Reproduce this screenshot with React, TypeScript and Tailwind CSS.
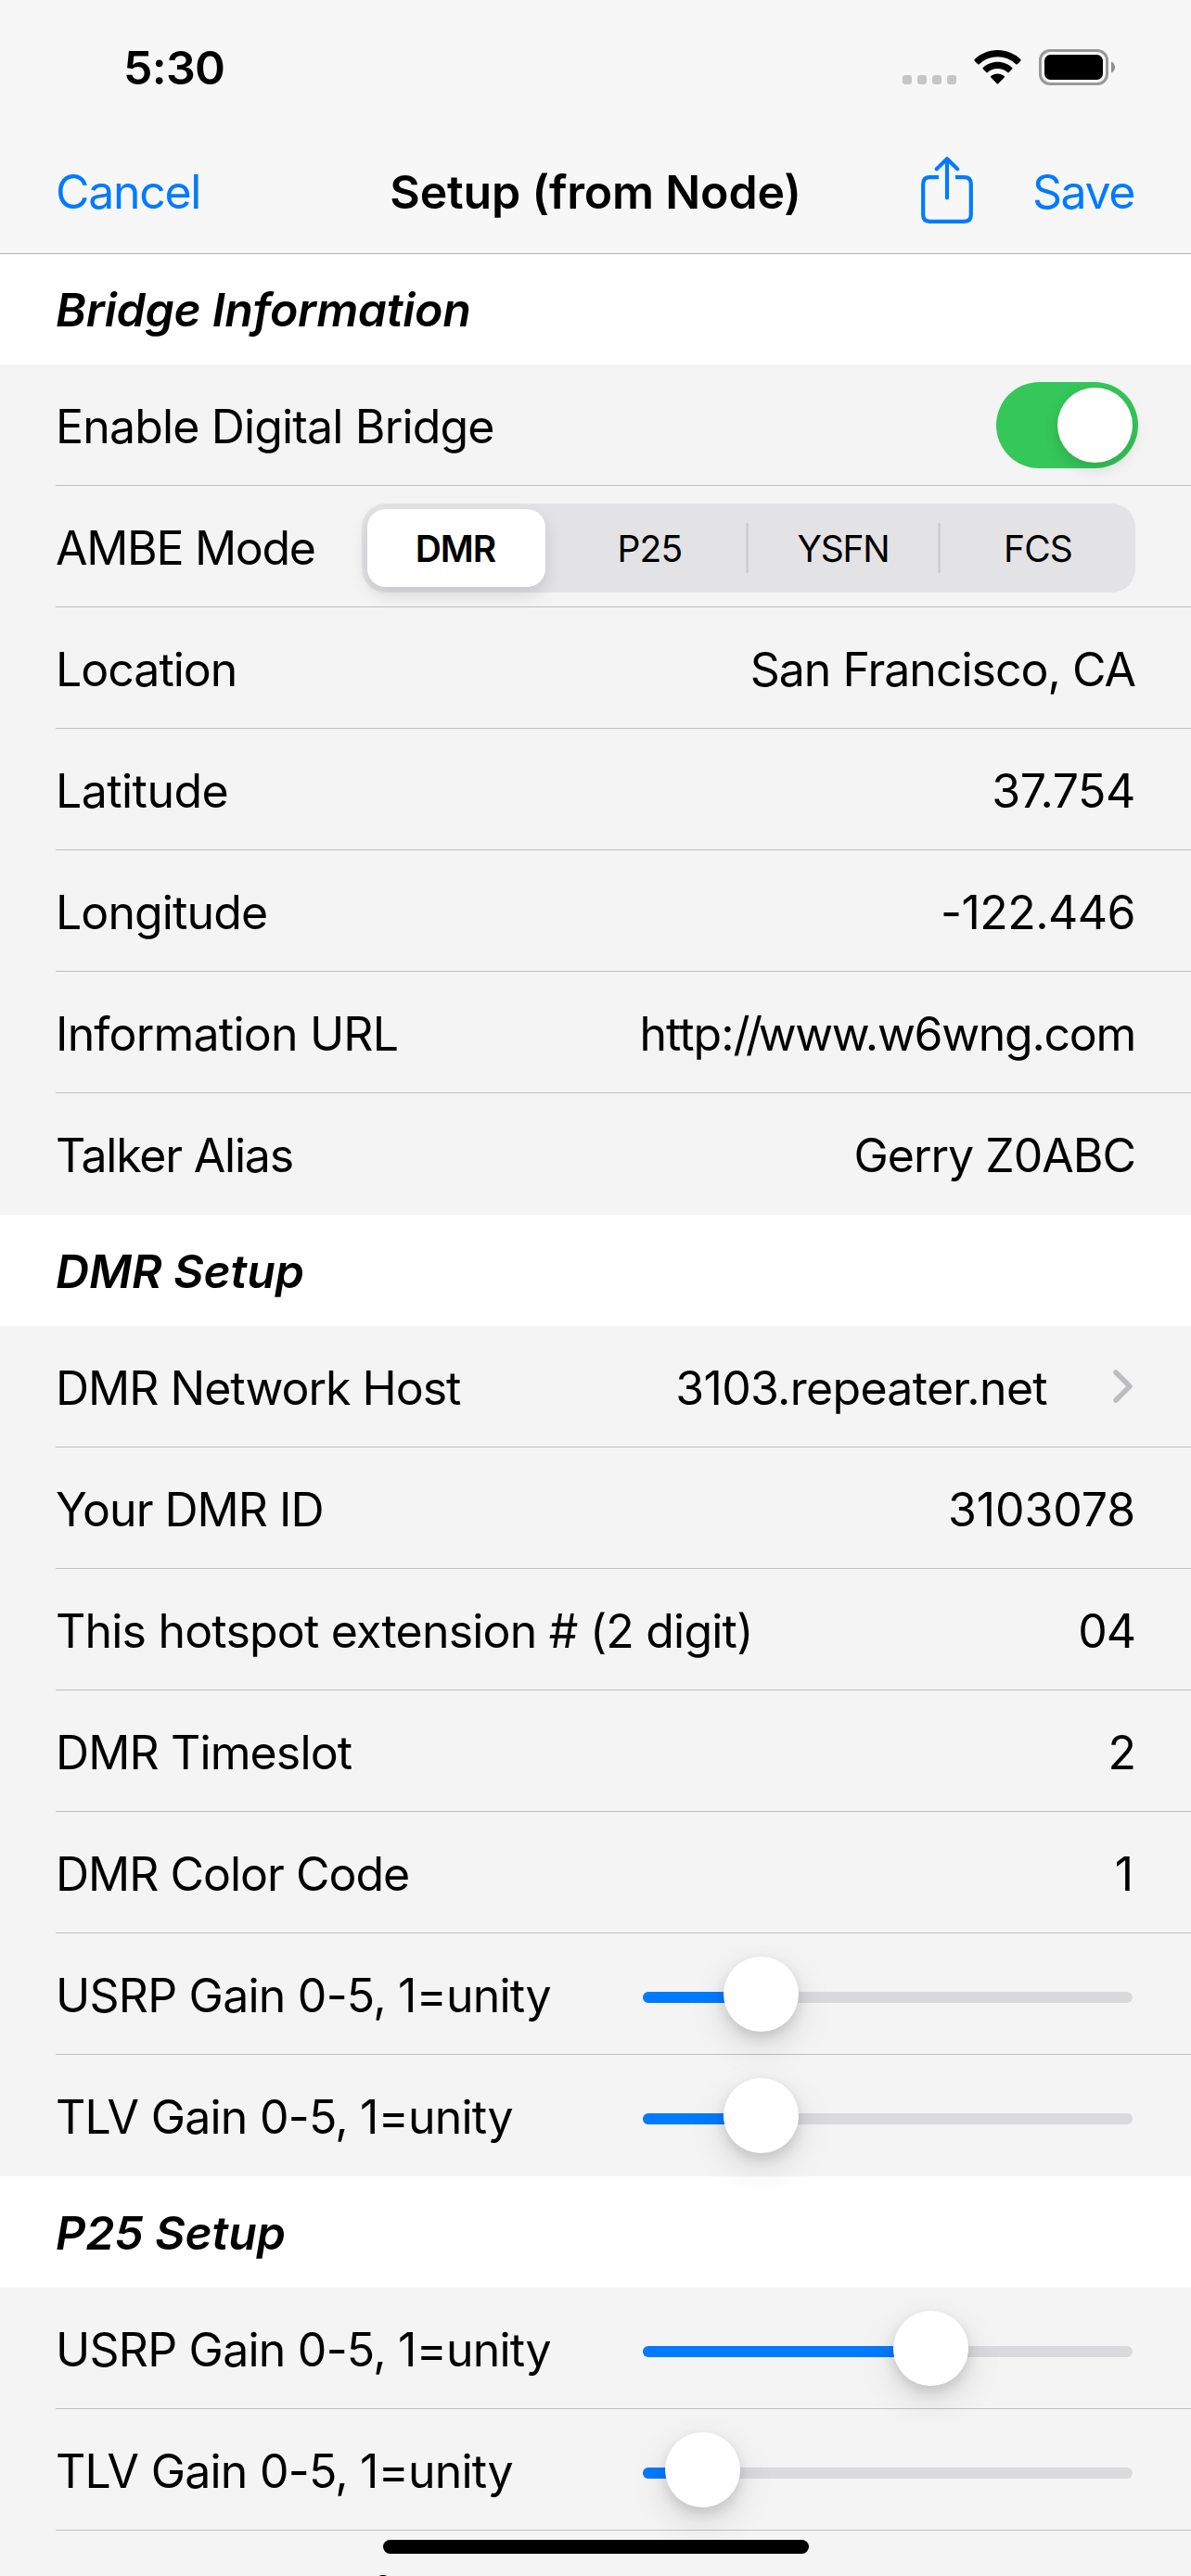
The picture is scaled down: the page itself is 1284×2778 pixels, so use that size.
import type { ReactNode } from "react";

type RowProps = {
  label: string;
  labelClass?: string;
  children?: ReactNode;
  last?: boolean;
};

type GainRowProps = {
  label: string;
  thumb: number;
  last?: boolean;
};

function WifiIcon() {
  return (
    <svg width="51" height="37" viewBox="0 0 51 37" fill="#000">
      <path d="M25.5 0C35 0 44 3.8 50.3 10.1C50.8 10.6 50.8 11.2 50.3 11.7L46.8 15.2C46.4 15.6 45.8 15.6 45.3 15.2C40 10.2 33 7.3 25.5 7.3S11 10.2 5.7 15.2C5.2 15.6 4.6 15.6 4.2 15.2L.7 11.7C.2 11.2 .2 10.6 .7 10.1C7 3.8 16 0 25.5 0Z" />
      <path d="M25.5 12.8C31.5 12.8 37 15.1 41.2 19C41.7 19.5 41.7 20.1 41.2 20.6L37.7 24.1C37.3 24.5 36.7 24.5 36.2 24.1C33.3 21.5 29.6 20.1 25.5 20.1S17.7 21.5 14.8 24.1C14.3 24.5 13.7 24.5 13.3 24.1L9.8 20.6C9.3 20.1 9.3 19.5 9.8 19C14 15.1 19.5 12.8 25.5 12.8Z" />
      <path d="M25.5 25.5C28.3 25.5 30.7 26.4 32.7 28C33.2 28.5 33.2 29.1 32.7 29.6L26.2 36.2C25.7 36.7 25.3 36.7 24.8 36.2L18.3 29.6C17.8 29.1 17.8 28.5 18.3 28C20.3 26.4 22.7 25.5 25.5 25.5Z" />
    </svg>
  );
}

function BatteryIcon() {
  return (
    <svg width="83" height="39" viewBox="0 0 83 39" fill="none">
      <rect x="1.5" y="1.5" width="72" height="36" rx="10.5" stroke="#999" strokeWidth="3" />
      <rect x="6" y="6" width="63" height="27" rx="6.5" fill="#000" />
      <path d="M78 13.5C80.5 14.5 82 16.8 82 19.5S80.5 24.5 78 25.5Z" fill="#8f8f8f" />
    </svg>
  );
}

function ShareIcon() {
  return (
    <svg
      width="57"
      height="72"
      viewBox="0 0 57 72"
      fill="none"
      stroke="#007aff"
      strokeWidth="4.2"
      strokeLinecap="round"
      strokeLinejoin="round"
    >
      <path d="M19 22.2H9.5Q2.2 22.2 2.2 29.5V62.5Q2.2 69.8 9.5 69.8H46.5Q53.8 69.8 53.8 62.5V29.5Q53.8 22.2 46.5 22.2H37" strokeLinecap="butt" />
      <path d="M28 44.5V3" />
      <path d="M16.8 13.2L28 2.2L39.2 13.2" />
    </svg>
  );
}

function ChevronIcon() {
  return (
    <svg width="22" height="36" viewBox="0 0 22 36" fill="none" stroke="#bdbdbf" strokeWidth="5.5" strokeLinecap="round" strokeLinejoin="round">
      <path d="M3 3L18 18L3 33" />
    </svg>
  );
}

function Row({ label, labelClass = "pt-1", children, last }: RowProps) {
  return (
    <div className="h-[131px] pl-[60px]">
      <div
        className={`flex h-full items-center justify-between border-b pr-[60px] ${
          last ? "border-transparent" : "border-[#bfbfc0]"
        }`}
      >
        <span className={`whitespace-nowrap ${labelClass}`}>{label}</span>
        {children}
      </div>
    </div>
  );
}

function Value({ children, className = "pt-1" }: { children: ReactNode; className?: string }) {
  return <span className={`whitespace-nowrap ${className}`}>{children}</span>;
}

function SectionTitle({ children, className }: { children: string; className: string }) {
  return (
    <div className={`flex items-center bg-white pt-px pl-[60px] font-semibold italic ${className}`}>
      {children}
    </div>
  );
}

function GainRow({ label, thumb, last }: GainRowProps) {
  return (
    <Row label={label} labelClass="pt-1 tracking-[-0.77px]" last={last}>
      <div className="relative mt-2 mr-[3px] h-3 w-[528px] shrink-0 rounded-full bg-[#dadadc]">
        <div className="h-3 rounded-l-full bg-[#007aff]" style={{ width: thumb + 40 }} />
        <div
          className="absolute -top-[38px] size-[81px] rounded-full bg-white shadow-[0_14px_38px_rgba(0,0,0,0.13),0_6px_14px_rgba(0,0,0,0.12)]"
          style={{ left: thumb }}
        />
      </div>
    </Row>
  );
}

function App() {
  return (
    <div className="relative h-[2778px] w-[1284px] overflow-hidden bg-[#f4f4f4] font-['Inter','Liberation_Sans',sans-serif] text-[50px] leading-none tracking-[-1px] text-black">
      <header className="h-[274px] border-b border-[#b1b1b2] bg-[#f7f7f7]">
        <div className="flex h-[145px] items-center justify-between pr-[81px] pl-[133px]">
          <span className="font-semibold tracking-[-0.7px]">5:30</span>
          <div className="flex items-center">
            <div className="mt-[27px] mr-[19px] flex gap-[6px]">
              <i className="size-[10px] rounded-[3px] bg-[#c6c6c6]" />
              <i className="size-[10px] rounded-[3px] bg-[#c6c6c6]" />
              <i className="size-[10px] rounded-[3px] bg-[#c6c6c6]" />
              <i className="size-[10px] rounded-[3px] bg-[#c6c6c6]" />
            </div>
            <WifiIcon />
            <div className="ml-[19px]">
              <BatteryIcon />
            </div>
          </div>
        </div>
        <div className="grid h-[120px] grid-cols-[1fr_auto_1fr] items-center px-[60px]">
          <button className="pt-1 text-left tracking-[-1.3px] text-[#007aff]">Cancel</button>
          <h1 className="pt-1 font-semibold tracking-[-0.17px]">Setup (from Node)</h1>
          <div className="flex items-center justify-end gap-[63px] text-[#007aff]">
            <ShareIcon />
            <button className="mr-px pt-1 tracking-[-1.4px]">Save</button>
          </div>
        </div>
      </header>

      <SectionTitle className="h-[119px] tracking-[-0.3px]">Bridge Information</SectionTitle>
      <Row label="Enable Digital Bridge" labelClass="pt-1 tracking-[-0.84px]">
        <div className="-mr-[3px] flex h-[93px] w-[153px] justify-end rounded-full bg-[#35c759] p-[6px]">
          <div className="size-[81px] rounded-full bg-white shadow-[0_6px_16px_rgba(0,0,0,0.15)]" />
        </div>
      </Row>
      <Row label="AMBE Mode" labelClass="pt-1 tracking-[-1.3px]">
        <div className="mt-1 flex h-24 w-[834px] items-center rounded-[26px] bg-[#e3e3e5] text-center text-[39px] tracking-[-0.8px]">
          <div className="mr-[9px] ml-[6px] flex h-[84px] w-[192px] items-center justify-center rounded-[20px] bg-white pr-[2px] font-semibold tracking-[-1px] shadow-[0_8px_18px_rgba(0,0,0,0.13)]">
            DMR
          </div>
          <span className="w-[207px]">P25</span>
          <i className="h-[54px] w-[3px] rounded-full bg-[#cfcfd1]" />
          <span className="w-[204px] tracking-[-1.2px]">YSFN</span>
          <i className="h-[54px] w-[3px] rounded-full bg-[#cfcfd1]" />
          <span className="flex-1">FCS</span>
        </div>
      </Row>
      <Row label="Location">
        <Value>San Francisco, CA</Value>
      </Row>
      <Row label="Latitude" labelClass="pt-1 tracking-[-0.55px]">
        <Value className="pt-1 tracking-[-0.4px]">37.754</Value>
      </Row>
      <Row label="Longitude" labelClass="pt-1 tracking-[-0.9px]">
        <Value className="pt-1 tracking-[-0.55px]">-122.446</Value>
      </Row>
      <Row label="Information URL" labelClass="pt-1 tracking-[-0.8px]">
        <Value>
          http:<span className="tracking-[-4.5px]">//</span>
          <span className="tracking-[-1.3px]">www.w6wng.com</span>
        </Value>
      </Row>
      <Row label="Talker Alias" labelClass="pt-1 tracking-[-1.2px]" last>
        <Value>Gerry Z0ABC</Value>
      </Row>

      <SectionTitle className="h-[120px] tracking-[-0.1px]">DMR Setup</SectionTitle>
      <Row label="DMR Network Host">
        <div className="flex items-center gap-[71px]">
          <Value className="pt-1 tracking-[-0.7px]">3103.repeater.net</Value>
          <div className="mr-[2px]">
            <ChevronIcon />
          </div>
        </div>
      </Row>
      <Row label="Your DMR ID">
        <Value className="pt-1 tracking-[-0.1px]">3103078</Value>
      </Row>
      <Row label="This hotspot extension # (2 digit)" labelClass="pt-1 tracking-[-0.8px]">
        <Value>04</Value>
      </Row>
      <Row label="DMR Timeslot" labelClass="pt-1 tracking-[-0.87px]">
        <Value>2</Value>
      </Row>
      <Row label="DMR Color Code">
        <Value className="pt-1 pr-[3px]">1</Value>
      </Row>
      <GainRow label="USRP Gain 0-5, 1=unity" thumb={87} />
      <GainRow label="TLV Gain 0-5, 1=unity" thumb={87} last />

      <SectionTitle className="h-[120px] tracking-[-0.1px]">P25 Setup</SectionTitle>
      <GainRow label="USRP Gain 0-5, 1=unity" thumb={270} />
      <GainRow label="TLV Gain 0-5, 1=unity" thumb={24} />
      <Row label="P25 Startup Reflector" labelClass="pt-[5px] tracking-[-1.1px]" last>
        <Value className="pt-[5px] tracking-[-0.1px]">3103</Value>
      </Row>

      <div className="absolute bottom-6 left-[413px] h-[15px] w-[459px] rounded-full bg-black" />
    </div>
  );
}

export default App;
